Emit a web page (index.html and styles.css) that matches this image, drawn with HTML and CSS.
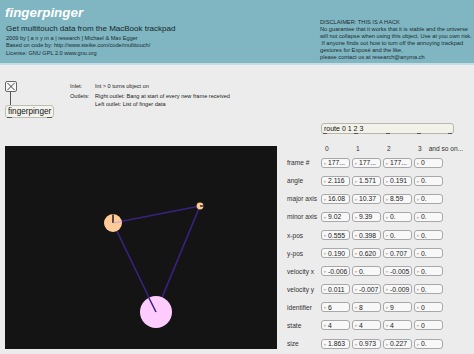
FILE: index.html
```html
<!DOCTYPE html>
<html lang="en">
<head>
<meta charset="UTF-8">
<meta name="viewport" content="width=device-width, initial-scale=1.0">
<link rel="stylesheet" href="styles.css">
<title>fingerpinger</title>
</head>
<body>
  <header class="banner">
    <div class="intro">
      <h1 class="title">fingerpinger</h1>
      <p class="subtitle">Get multitouch data from the MacBook trackpad</p>
      <p class="credits">2009 by [ a n y m a | research ] Michael &amp; Max Egger<br>Based on code by: http://www.steike.com/code/multitouch/<br>License: GNU GPL 2.0 www.gnu.org</p>
    </div>
    <p class="disclaimer">DISCLAIMER: THIS IS A HACK<br>No guarantee that it works that it is stable and the universe<br>will not collapse when using this object. Use at you own risk.<br>&nbsp;If anyone finds out how to turn off the annoying trackpad<br>gestures for Exposé and the like,<br>please contact us at research@anyma.ch</p>
  </header>

  <main class="patch">
    <div class="left">
      <div class="objects">
        <div class="stack">
          <div class="toggle">
            <svg width="10" height="9" viewBox="0 0 10 9"><path d="M1.5 1 L8.5 8 M8.5 1 L1.5 8" stroke="#444" stroke-width="1" fill="none"/></svg>
          </div>
          <div class="cord"></div>
          <div class="object">fingerpinger</div>
        </div>
        <div class="info">
          <span class="inlet">Inlet:</span><span class="inlet">Int &gt; 0 turns object on</span>
          <span>Outlets:</span><span>Right outlet: Bang at start of every new frame received</span>
          <span></span><span>Left outlet: List of finger data</span>
        </div>
      </div>
      <svg class="lcd" width="272" height="203" viewBox="0 0 272 203">
        <g stroke="#3a2283" stroke-width="1.6">
          <line x1="108" y1="77" x2="195" y2="60"/>
          <line x1="195" y1="60" x2="151" y2="166"/>
          <line x1="108" y1="77" x2="151" y2="166"/>
        </g>
        <circle cx="108" cy="77" r="9" fill="#ffcc99"/>
        <circle cx="195" cy="60" r="3.4" fill="#ffcc88"/>
        <circle cx="151" cy="166" r="16" fill="#ffccff"/>
        <line x1="108" y1="77" x2="108" y2="68.5" stroke="#111" stroke-width="1.4"/>
        <line x1="108" y1="77" x2="117" y2="75.5" stroke="#c9a0d8" stroke-width="1"/>
        <line x1="195" y1="60" x2="198.5" y2="60" stroke="#2a1a50" stroke-width="1.4"/>
        <line x1="151" y1="166" x2="143" y2="150" stroke="#3a2283" stroke-width="1.6"/>
      </svg>
    </div>

    <div class="readout">
      <div class="route">route 0 1 2 3
        <div class="outlets"><span></span><span></span><span></span><span></span><span></span></div>
      </div>
      <div class="cols">
        <span></span><span>0</span><span>1</span><span>2</span><span>3<em class="more">and so on...</em></span>
      </div>
      <div class="rows">
        <span class="label">frame #</span><span class="num">177...</span><span class="num">177...</span><span class="num">177...</span><span class="num">0</span>
        <span class="label">angle</span><span class="num">2.116</span><span class="num">1.571</span><span class="num">0.191</span><span class="num">0.</span>
        <span class="label">major axis</span><span class="num">16.08</span><span class="num">10.37</span><span class="num">8.59</span><span class="num">0.</span>
        <span class="label">minor axis</span><span class="num">9.02</span><span class="num">9.39</span><span class="num">0.</span><span class="num">0.</span>
        <span class="label">x-pos</span><span class="num">0.555</span><span class="num">0.398</span><span class="num">0.</span><span class="num">0.</span>
        <span class="label">y-pos</span><span class="num">0.190</span><span class="num">0.620</span><span class="num">0.707</span><span class="num">0.</span>
        <span class="label">velocity x</span><span class="num">-0.006</span><span class="num">0.</span><span class="num">-0.005</span><span class="num">0.</span>
        <span class="label">velocity y</span><span class="num">0.011</span><span class="num">-0.007</span><span class="num">-0.009</span><span class="num">0.</span>
        <span class="label">identifier</span><span class="num">6</span><span class="num">8</span><span class="num">9</span><span class="num">0</span>
        <span class="label">state</span><span class="num">4</span><span class="num">4</span><span class="num">4</span><span class="num">0</span>
        <span class="label">size</span><span class="num">1.863</span><span class="num">0.973</span><span class="num">0.227</span><span class="num">0.</span>
      </div>
    </div>
  </main>
</body>
</html>
```

FILE: styles.css
```css
body {
  margin: 0;
  width: 474px;
  height: 354px;
  overflow: hidden;
  background-color: #ececec;
  font-family: "Liberation Sans", Arial, sans-serif;
  color: #222;
}
p, h1 {
  margin: 0;
}

/* header band */
.banner {
  display: grid;
  grid-template-columns: 320px 1fr;
  height: 63px;
  background-color: #7fb6c2;
  border-bottom: 2px solid #c4dee4;
}
.intro {
  padding: 5px 0 0 5px;
}
.title {
  font-size: 13.4px;
  line-height: 15px;
  font-weight: bold;
  font-style: italic;
  color: #fff;
}
.subtitle {
  margin: 4px 0 0 1px;
  font-size: 8px;
  line-height: 9px;
  color: #17262b;
}
.credits {
  margin: 2px 0 0 1px;
  font-size: 5.6px;
  line-height: 7.3px;
  color: #1c2b30;
  white-space: nowrap;
}
.disclaimer {
  margin-top: 18.5px;
  font-size: 5.7px;
  line-height: 7.1px;
  color: #1c2b30;
  white-space: nowrap;
}

/* patch area */
.patch {
  display: grid;
  grid-template-columns: 272px 1fr;
  column-gap: 10px;
  padding-left: 5px;
}
.left {
  display: flex;
  flex-direction: column;
}
.objects {
  height: 81px;
  display: flex;
}
.stack {
  width: 65px;
  padding-top: 16px;
  display: flex;
  flex-direction: column;
  align-items: flex-start;
}
.toggle {
  width: 12px;
  height: 11px;
  box-sizing: border-box;
  border: 1px solid #666;
  border-radius: 2px;
  background-color: #f6f6f6;
  display: flex;
}
.toggle svg {
  display: block;
}
.cord {
  width: 1px;
  height: 13px;
  margin-left: 5px;
  background-color: #555;
}
.object {
  position: relative;
  height: 13px;
  box-sizing: border-box;
  padding: 0 2px;
  border: 1px solid #bdbdb0;
  border-radius: 3px;
  background-color: #f4f4ee;
  font-size: 8.2px;
  line-height: 11px;
  color: #111;
}
.object::before,
.object::after {
  content: "";
  position: absolute;
  bottom: -1px;
  width: 5px;
  height: 1.5px;
  background-color: #555;
}
.object::before {
  left: 1px;
}
.object::after {
  right: 1px;
}
.info {
  padding-top: 17px;
  display: grid;
  grid-template-columns: 25px auto;
  grid-template-rows: 10px 8px 8px;
  font-size: 5.6px;
  line-height: 8px;
  color: #222;
  white-space: nowrap;
}
.lcd {
  display: block;
  background-color: #141414;
}

/* right side readout */
.readout {
  padding-top: 58px;
}
.route {
  position: relative;
  margin-left: 34px;
  width: 133px;
  height: 11px;
  box-sizing: border-box;
  padding-left: 2px;
  border: 1px solid #b8b8a8;
  border-radius: 3px;
  background-color: #f2f2ea;
  font-size: 7px;
  line-height: 9px;
  color: #111;
}
.outlets {
  position: absolute;
  left: 1px;
  right: 1px;
  bottom: -1px;
  display: flex;
  justify-content: space-between;
}
.outlets span {
  width: 4px;
  height: 1.5px;
  background-color: #555;
}
.cols {
  display: grid;
  grid-template-columns: 34px repeat(4, 31px);
  margin-top: 10px;
  height: 9px;
  font-size: 6.6px;
  line-height: 9px;
  color: #333;
}
.cols span {
  padding-left: 4px;
  white-space: nowrap;
}
.more {
  font-style: normal;
  margin-left: 7px;
}
.rows {
  display: grid;
  grid-template-columns: 34px repeat(4, 31px);
  grid-auto-rows: 18.1px;
  align-items: center;
  margin-top: 0.6px;
}
.label {
  font-size: 6.6px;
  color: #333;
  white-space: nowrap;
}
.num {
  width: 29px;
  height: 10px;
  box-sizing: border-box;
  padding-left: 2px;
  border: 1px solid #a8a8a8;
  border-radius: 3px;
  background-color: #f8f8f8;
  display: flex;
  align-items: center;
  font-size: 6.8px;
  color: #222;
  white-space: nowrap;
  overflow: hidden;
}
.num::before {
  content: "\25B8";
  font-size: 5px;
  color: #c0c0c0;
  margin-right: 1px;
}
```
